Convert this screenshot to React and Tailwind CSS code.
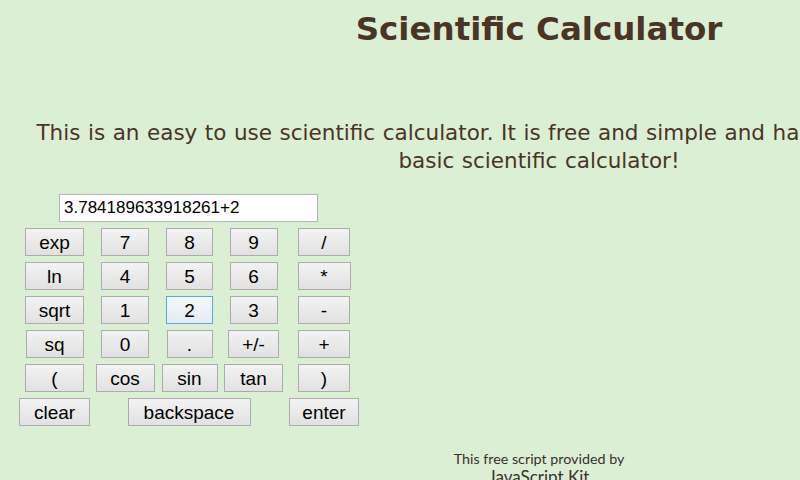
import React from 'react';

const rows = [
    [['exp', 59], ['7', 48], ['8', 47], ['9', 48], ['/', 52]],
    [['ln', 59], ['4', 48], ['5', 47], ['6', 48], ['*', 53]],
    [['sqrt', 59], ['1', 48], ['2', 47, true], ['3', 48], ['-', 52]],
    [['sq', 58], ['0', 48], ['.', 46], ['+/-', 51], ['+', 52]],
    [['(', 59], ['cos', 59], ['sin', 56], ['tan', 59], [')', 52]],
];

const Key = ({ label, width, focused }) => (
    <div className="flex justify-center">
        <button
            style={{ width }}
            className={
                focused
                    ? 'h-[28px] border border-[#5aa6ec] bg-gradient-to-b from-[#f4f8fb] to-[#e4ebf2] text-[19px] text-black leading-none'
                    : 'h-[28px] border border-[#acacac] bg-gradient-to-b from-[#f3f3f3] to-[#e1e1e1] text-[19px] text-black leading-none'
            }
        >
            {label}
        </button>
    </div>
);

const App = () => {
    return (
        <div className="w-[800px] h-[480px] overflow-hidden bg-[#dbefd4]">
            <div className="w-[1078px] text-[#4a3426] font-['DejaVu_Sans',Verdana,sans-serif]">
                <h1 className="pt-[10px] text-center text-[32.5px] font-bold leading-[38px]">Scientific Calculator</h1>
                <p className="mt-[71px] text-center text-[21.5px] leading-[28px] [word-spacing:0.7px]">
                    This is an easy to use scientific calculator. It is free and simple and has all the functions of a
                    <br />
                    basic scientific calculator!
                </p>

                <div className="mt-[19px] ml-[17px] grid grid-cols-[75px_66px_63px_65px_76px] auto-rows-[28px] gap-y-[6px] w-[345px] font-['Liberation_Sans',Arial,sans-serif]">
                    <div className="col-span-5 flex justify-center pr-[2px]">
                        <input
                            readOnly
                            value="3.784189633918261+2"
                            className="w-[259px] h-[28px] bg-white border border-[#b5b5b5] px-[4px] text-[17px] text-black outline-none"
                        />
                    </div>
                    {rows.map((row, i) =>
                        row.map(([label, width, focused], j) => (
                            <Key key={i + '-' + j} label={label} width={width} focused={focused} />
                        ))
                    )}
                    <Key label="clear" width={71} />
                    <div className="col-span-3 flex justify-center">
                        <button className="w-[123px] h-[28px] border border-[#acacac] bg-gradient-to-b from-[#f3f3f3] to-[#e1e1e1] text-[19px] text-black leading-none">
                            backspace
                        </button>
                    </div>
                    <Key label="enter" width={70} />
                </div>

                <div className="mt-[24px] text-center font-['Lato','Liberation_Sans',sans-serif] text-[#3c3030]">
                    <div className="text-[14.3px] leading-[17px]">This free script provided by</div>
                    <div className="text-[17px] leading-[20px]">JavaScript Kit</div>
                </div>
            </div>
        </div>
    );
};

export default App;
